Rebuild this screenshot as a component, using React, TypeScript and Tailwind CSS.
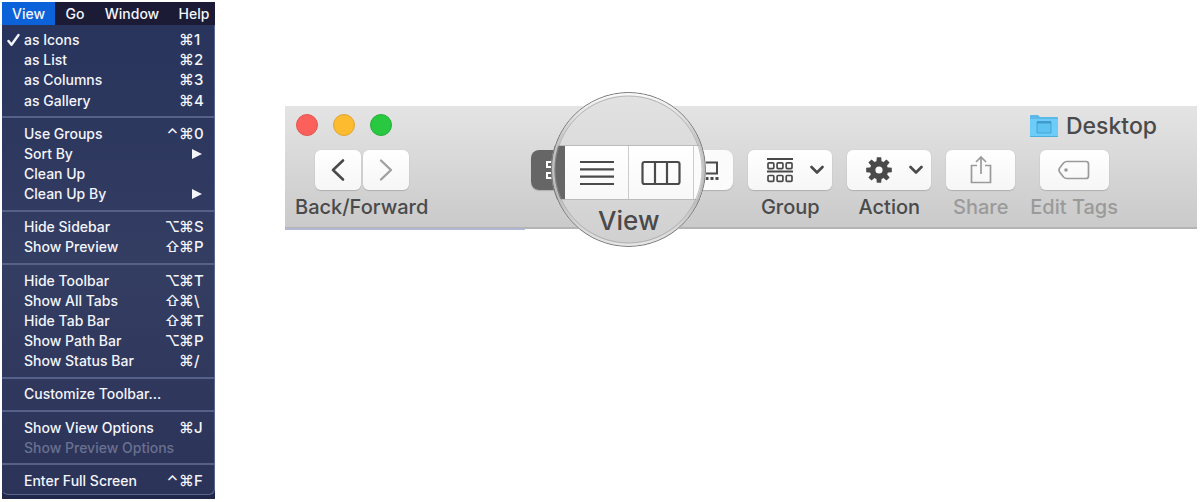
import React from "react";

type Item = { label: string; mods?: string; shortcut?: string; checked?: boolean; submenu?: boolean; disabled?: boolean };

const groups: Item[][] = [
  [
    { label: "as Icons", mods: "⌘", shortcut: "1", checked: true },
    { label: "as List", mods: "⌘", shortcut: "2" },
    { label: "as Columns", mods: "⌘", shortcut: "3" },
    { label: "as Gallery", mods: "⌘", shortcut: "4" },
  ],
  [
    { label: "Use Groups", mods: "⌃⌘", shortcut: "0" },
    { label: "Sort By", submenu: true },
    { label: "Clean Up" },
    { label: "Clean Up By", submenu: true },
  ],
  [
    { label: "Hide Sidebar", mods: "⌥⌘", shortcut: "S" },
    { label: "Show Preview", mods: "⇧⌘", shortcut: "P" },
  ],
  [
    { label: "Hide Toolbar", mods: "⌥⌘", shortcut: "T" },
    { label: "Show All Tabs", mods: "⇧⌘", shortcut: "\\" },
    { label: "Hide Tab Bar", mods: "⇧⌘", shortcut: "T" },
    { label: "Show Path Bar", mods: "⌥⌘", shortcut: "P" },
    { label: "Show Status Bar", mods: "⌘", shortcut: "/" },
  ],
  [{ label: "Customize Toolbar..." }],
  [
    { label: "Show View Options", mods: "⌘", shortcut: "J" },
    { label: "Show Preview Options", disabled: true },
  ],
  [{ label: "Enter Full Screen", mods: "⌃⌘", shortcut: "F" }],
];

function MenuRow({ item }: { item: Item }) {
  return (
    <li className="flex grow basis-5">
      <button
        type="button"
        disabled={item.disabled}
        className="flex w-full items-center pr-[11px] text-left whitespace-nowrap disabled:text-[#69718f]"
      >
        <span className="flex w-[22px] shrink-0 justify-center">
          {item.checked && (
            <svg width="14" height="14" viewBox="0 0 14 14" aria-hidden="true">
              <path d="M2.500 8 5.500 11.800 12.500 2" fill="none" stroke="currentColor" strokeWidth="2.400" strokeLinecap="round" strokeLinejoin="round" />
            </svg>
          )}
        </span>
        <span className="grow">{item.label}</span>
        {item.mods && (
          <span className="flex gap-px text-[15px]">
            {Array.from(item.mods).map((m) => (
              <span key={m} className="flex w-[13px] justify-center">{m}</span>
            ))}
            <span className="w-[9px]">{item.shortcut}</span>
          </span>
        )}
        {item.submenu && (
          <svg width="12" height="12" viewBox="0 0 12 12" aria-hidden="true">
            <path d="M1 1v10l10-5z" fill="currentColor" />
          </svg>
        )}
      </button>
    </li>
  );
}

function ViewMenu() {
  return (
    <aside className="flex w-[213px] shrink-0 flex-col bg-[#202748] text-[14px] leading-5 font-medium text-[#f3f5fb]">
      <nav className="flex h-[23px] shrink-0 bg-[#1b1b36]">
        <button type="button" className="w-[53px] bg-[#0c63d9]">View</button>
        <button type="button" className="w-10">Go</button>
        <button type="button" className="w-[74px]">Window</button>
        <button type="button" className="grow pl-1">Help</button>
      </nav>
      <ul className="flex grow flex-col rounded-b-md border-r border-b border-[#5a668c] bg-linear-to-b from-[#28345c] via-[#343d62] to-[#2c3359] pt-[5px] pb-[3px]">
        {groups.map((group, i) => (
          <React.Fragment key={group[0].label}>
            {i > 0 && (
              <li role="separator" className="flex h-[13px] shrink-0 items-center">
                <span className="h-0.5 w-full bg-[#56618a]" />
              </li>
            )}
            {group.map((item) => (
              <MenuRow key={item.label} item={item} />
            ))}
          </React.Fragment>
        ))}
      </ul>
      <div className="h-1 shrink-0" />
    </aside>
  );
}

const buttonBase =
  "flex h-10 items-center justify-center rounded-md bg-linear-to-b from-white to-[#f6f6f6] shadow-[0_1px_1px_0_#b0b0b0,0_0_1px_0_#b8b8b8]";

function Chevron() {
  return (
    <svg width="14" height="10" viewBox="0 0 14 10" aria-hidden="true">
      <path d="M1.500 2 7 7.500 12.500 2" fill="none" stroke="currentColor" strokeWidth="2.600" strokeLinecap="round" strokeLinejoin="round" />
    </svg>
  );
}

function GroupIcon() {
  return (
    <svg width="26" height="26" viewBox="0 0 26 26" fill="none" stroke="currentColor" strokeWidth="1.700" aria-hidden="true">
      <path d="M0 2h26M0 14.500h26" strokeWidth="1.900" />
      {[5.8, 18.5].map((y) => [1, 10.1, 19.2].map((x) => <rect key={`${x}-${y}`} x={x} y={y} width="5.800" height="5.800" rx="1" />))}
    </svg>
  );
}

function GearIcon() {
  return (
    <svg width="26" height="26" viewBox="-13 -13 26 26" fill="currentColor" aria-hidden="true">
      {[0, 45, 90, 135, 180, 225, 270, 315].map((a) => (
        <path key={a} d="M-2.700-7 -2.200-12.800H2.200L2.700-7z" transform={`rotate(${a})`} />
      ))}
      <circle r="6.400" fill="none" stroke="currentColor" strokeWidth="5.600" />
    </svg>
  );
}

function Tool({ label, disabled, width, children }: { label: string; disabled?: boolean; width: string; children: React.ReactNode }) {
  return (
    <label className={`flex flex-col items-center gap-[3px] ${disabled ? "text-[#9a9a9a]" : "text-[#4a4a4a]"}`}>
      <button type="button" disabled={disabled} className={`${buttonBase} ${width}`}>{children}</button>
      <span className="text-[20px] leading-7 font-medium whitespace-nowrap">{label}</span>
    </label>
  );
}

function Lens() {
  return (
    <div className="absolute -top-[58px] left-5 size-[155px] overflow-hidden rounded-full bg-linear-to-b from-[#e2e2e2] to-[#d0d0d0] pt-[53px]">
      <div className="flex h-[55px] border-y border-[#bbb] text-[#4a4a4a]">
        <span className="w-3.5 shrink-0 bg-[#666]" />
        <button type="button" aria-label="List" className="flex w-16 shrink-0 items-center justify-center border-r border-[#ccc] bg-linear-to-b from-white to-[#f8f8f8]">
          <svg width="34" height="26" viewBox="0 0 34 26" aria-hidden="true">
            <path d="M0 2h34M0 9.300h34M0 16.600h34M0 24h34" stroke="currentColor" strokeWidth="2.200" />
          </svg>
        </button>
        <button type="button" aria-label="Columns" className="flex w-[65px] shrink-0 items-center justify-center border-r border-[#ccc] bg-linear-to-b from-white to-[#f8f8f8]">
          <svg width="40" height="26" viewBox="0 0 40 26" fill="none" stroke="currentColor" strokeWidth="2.200" aria-hidden="true">
            <rect x="1.500" y="2" width="37" height="22" rx="2" />
            <path d="M14 2v22M26 2v22" />
          </svg>
        </button>
        <span className="grow bg-[#fbfbfb]" />
      </div>
      <span className="block text-center text-[26px] leading-[42px] font-medium text-[#4a4a4a]">View</span>
      <svg className="pointer-events-none absolute inset-0 size-full" viewBox="0 0 155 155" fill="none" aria-hidden="true">
        <defs>
          <linearGradient id="rim" x1="0" y1="0" x2="0" y2="1">
            <stop offset="0" stopColor="#fafafa" />
            <stop offset="0.300" stopColor="#c4c4c4" />
            <stop offset="0.700" stopColor="#bcbcbc" />
            <stop offset="1" stopColor="#e6e6e6" />
          </linearGradient>
        </defs>
        <circle cx="77.500" cy="77.500" r="75.500" stroke="url(#rim)" strokeWidth="3" />
        <circle cx="77.500" cy="77.500" r="73.500" stroke="#999" strokeWidth="0.600" />
        <circle cx="77.500" cy="77.500" r="77" stroke="#777" />
      </svg>
    </div>
  );
}

function Toolbar() {
  return (
    <div className="relative mt-[104px] mr-[3px] ml-[70px] h-fit grow border-b-2 border-[#b4b4b4] bg-linear-to-b from-[#e4e4e4] to-[#cacaca]">
      <header className="flex h-[38px] items-center pr-10 pl-[11px]">
        <div className="flex grow gap-[15px]">
          <button type="button" aria-label="Close" className="size-[22px] rounded-full border border-[#e2544d] bg-[#fc605b]" />
          <button type="button" aria-label="Minimize" className="size-[22px] rounded-full border border-[#e0a333] bg-[#fdbc2f]" />
          <button type="button" aria-label="Zoom" className="size-[22px] rounded-full border border-[#25ad38] bg-[#28c940]" />
        </div>
        <h1 className="flex items-center gap-2 pt-0.5 text-[23px] font-medium text-[#4a4a4a]">
          <svg width="28" height="24" viewBox="0 0 28 24" aria-hidden="true">
            <path d="M0 2Q0 1 1 1h7l2 2h17q1 0 1 1v18q0 1-1 1H1q-1 0-1-1z" fill="#5bb9e8" />
            <path d="M0 5h28v17q0 1-1 1H1q-1 0-1-1z" fill="#6dcdf8" />
            <path d="M7 7.500h14v11.500H7z" fill="#5fc3f1" stroke="#42a6d6" />
            <path d="M7 7h14v2.500H7z" fill="#3f9ccc" />
            <path d="M0 22h28q0 1-1 1H1q-1 0-1-1z" fill="#4aaedb" />
          </svg>
          Desktop
        </h1>
      </header>
      <div className="flex items-start pt-1.5 pb-1.5">
        <div className="ml-2.5 flex flex-col items-center gap-[3px] text-[#4a4a4a]">
          <div className="flex gap-0.5">
            <button type="button" aria-label="Back" className={`${buttonBase} w-[46px]`}>
              <svg width="14" height="24" viewBox="0 0 14 24" aria-hidden="true"><path d="M12 2.500 2 12l10 9.500" fill="none" stroke="currentColor" strokeWidth="2.600" strokeLinecap="round" strokeLinejoin="round" /></svg>
            </button>
            <button type="button" aria-label="Forward" className={`${buttonBase} w-[46px] text-[#a0a0a0]`}>
              <svg width="14" height="24" viewBox="0 0 14 24" aria-hidden="true"><path d="m2 2.500 10 9.500L2 21.500" fill="none" stroke="currentColor" strokeWidth="2.400" strokeLinecap="round" strokeLinejoin="round" /></svg>
            </button>
          </div>
          <span className="text-[20px] leading-7 font-medium">Back/Forward</span>
        </div>
        <div className="relative ml-auto w-[202px] shrink-0">
          <div className="flex h-10 justify-between overflow-hidden rounded-lg bg-[#fbfbfb] shadow-[0_1px_1px_0_#b0b0b0]">
            <button type="button" aria-label="Icons" className="flex w-10 items-center bg-[#666] pl-[15px] text-white">
              <svg width="20" height="20" viewBox="0 0 20 20" fill="none" stroke="currentColor" strokeWidth="2" aria-hidden="true">
                <path d="M1 2h6v5H1zM1 13h6v5H1zM12 2h6v5h-6zM12 13h6v5h-6z" />
              </svg>
            </button>
            <button type="button" aria-label="Gallery" className="flex w-[46px] items-center text-[#4a4a4a]">
              <svg width="32" height="20" viewBox="0 0 32 20" aria-hidden="true">
                <path d="M10 2.500h20v11H10z" fill="none" stroke="currentColor" strokeWidth="2" />
                <path d="M8.500 17h3v3h-3zM13.500 17h3v3h-3zM18.500 17h3v3h-3zM23.500 17h3v3h-3zM28.500 17h3v3h-3z" fill="currentColor" />
              </svg>
            </button>
          </div>
          <Lens />
        </div>
        <div className="mr-[79px] ml-[15px] flex gap-[15px]">
          <Tool label="Group" width="w-[84px] gap-[17px] pl-2.5"><GroupIcon /><Chevron /></Tool>
          <Tool label="Action" width="w-[84px] gap-[17px] pl-2.5"><GearIcon /><Chevron /></Tool>
          <Tool label="Share" width="w-[69px]" disabled>
            <svg width="22" height="30" viewBox="0 0 22 30" fill="none" stroke="currentColor" strokeWidth="1.700" aria-hidden="true">
              <path d="M7 10.500H1.500v17h19v-17H15M11 19V2M6 7l5-5 5 5" />
            </svg>
          </Tool>
          <Tool label="Edit Tags" width="w-[69px]" disabled>
            <svg width="32" height="20" viewBox="0 0 32 20" fill="none" stroke="currentColor" strokeWidth="1.700" aria-hidden="true">
              <path d="M9 1.500h19q2.500 0 2.500 2.500v12q0 2.500-2.500 2.500H9Q7 18.500 5.500 17L2 12.500Q0 10 2 7.500L5.500 3Q7 1.500 9 1.500z" />
              <circle cx="8" cy="10" r="1.800" fill="currentColor" stroke="none" />
            </svg>
          </Tool>
        </div>
      </div>
      <div className="absolute -bottom-[3px] left-0 h-0.5 w-60 bg-[#b2b8d2]" />
    </div>
  );
}

export default function App() {
  return (
    <main className="flex min-h-screen bg-white pt-0.5 pb-[3px] pl-0.5 font-[Inter,'Liberation_Sans',sans-serif]">
      <ViewMenu />
      <Toolbar />
    </main>
  );
}
